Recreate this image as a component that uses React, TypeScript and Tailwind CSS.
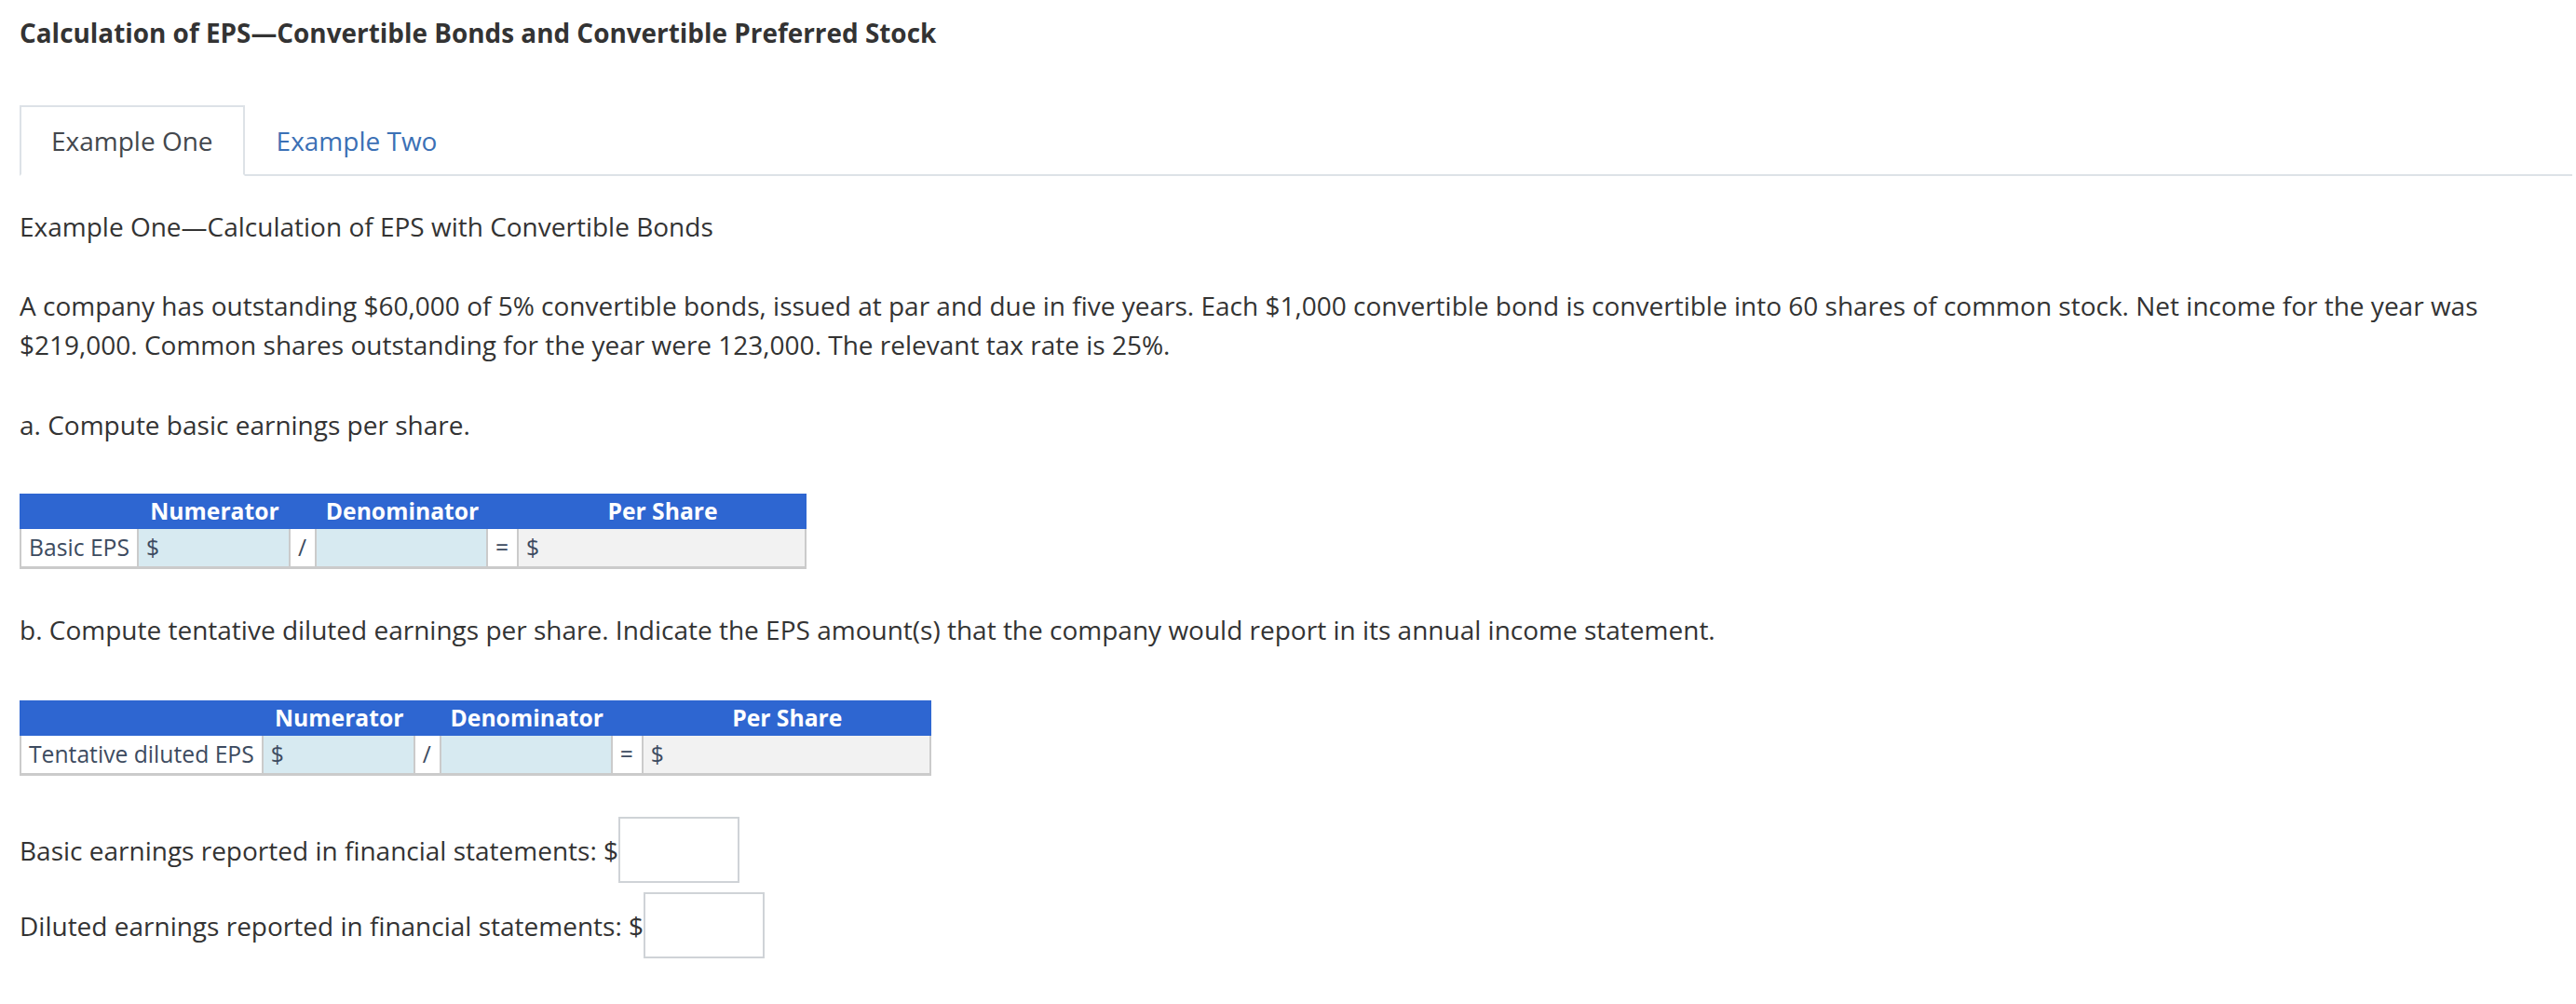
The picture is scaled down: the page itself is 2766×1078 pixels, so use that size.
import React from "react";

const font = { fontFamily: '"Open Sans", "Noto Sans", sans-serif' };

type EpsTableProps = {
	label: string;
};

const EpsTable = ({ label }: EpsTableProps) => {
	return (
		<div className="grid w-max grid-cols-[auto_163px_28px_184px_33px_309px] text-[24.7px] leading-[36px]">
			{/* header row */}
			<div className="h-[38px] bg-[#2e66d1]" />
			<div className="flex h-[38px] items-center justify-center bg-[#2e66d1] font-bold text-white">
				Numerator
			</div>
			<div className="h-[38px] bg-[#2e66d1]" />
			<div className="flex h-[38px] items-center justify-center bg-[#2e66d1] font-bold text-white">
				Denominator
			</div>
			<div className="h-[38px] bg-[#2e66d1]" />
			<div className="flex h-[38px] items-center justify-center bg-[#2e66d1] font-bold text-white">
				Per Share
			</div>

			{/* input row */}
			<div className="flex h-[43px] items-center border-x-2 border-b-[3px] border-[#cbcbcb] bg-white px-[8px] text-[#3d4b60] whitespace-nowrap">
				{label}
			</div>
			<div className="flex h-[43px] items-center border-r-2 border-b-[3px] border-[#cbcbcb] bg-[#d7eaf1] pl-[8px] text-[#3d4b60]">
				$
			</div>
			<div className="flex h-[43px] items-center border-r-2 border-b-[3px] border-[#cbcbcb] bg-white pl-[8px] text-[#3d4b60]">
				/
			</div>
			<div className="h-[43px] border-r-2 border-b-[3px] border-[#cbcbcb] bg-[#d7eaf1]" />
			<div className="flex h-[43px] items-center border-r-2 border-b-[3px] border-[#cbcbcb] bg-white pl-[8px] text-[#3d4b60]">
				=
			</div>
			<div className="flex h-[43px] items-center border-r-2 border-b-[3px] border-[#cbcbcb] bg-[#f2f2f2] pl-[8px] text-[#3d4b60]">
				$
			</div>
		</div>
	);
};

const AnswerRow = ({ text }: { text: string }) => (
	<div className="flex items-center">
		<span>{text}</span>
		<div className="h-[71px] w-[130px] border-2 border-[#cfd3d7] bg-white" />
	</div>
);

export default function App() {
	return (
		<div
			className="min-h-screen bg-white px-[21px] pt-[14px] pb-[40px] text-[28px] leading-[42px] text-[#333333]"
			style={font}
		>
			<h1 className="text-[27.9px] font-bold leading-[42px] text-[#333333]">
				Calculation of EPS—Convertible Bonds and Convertible Preferred Stock
			</h1>

			{/* Tabs */}
			<div className="mt-[57px] -mr-[17px] flex border-b-2 border-[#dde2e7]">
				<div className="-mb-[2px] border-2 border-[#dde2e7] border-b-white bg-white px-[32px] py-[15px] text-[#43474d]">
					Example One
				</div>
				<div className="-mb-[2px] border-2 border-transparent px-[32px] py-[15px] text-[#3b70b5]">
					Example Two
				</div>
			</div>

			<p className="mt-[33px]">
				Example One—Calculation of EPS with Convertible Bonds
			</p>

			<p className="mt-[43px]">
				A company has outstanding $60,000 of 5% convertible bonds, issued at
				par and due in five years. Each $1,000 convertible bond is convertible
				into 60 shares of common stock. Net income for the year was $219,000.
				Common shares outstanding for the year were 123,000. The relevant tax
				rate is 25%.
			</p>

			<p className="mt-[44px]">a. Compute basic earnings per share.</p>

			<div className="mt-[53px]">
				<EpsTable label="Basic EPS" />
			</div>

			<p className="mt-[44px]">
				b. Compute tentative diluted earnings per share. Indicate the EPS
				amount(s) that the company would report in its annual income
				statement.
			</p>

			<div className="mt-[55px]">
				<EpsTable label="Tentative diluted EPS" />
			</div>

			<div className="mt-[44px] flex flex-col gap-[10px]">
				<AnswerRow text="Basic earnings reported in financial statements: $" />
				<AnswerRow text="Diluted earnings reported in financial statements: $" />
			</div>
		</div>
	);
}
